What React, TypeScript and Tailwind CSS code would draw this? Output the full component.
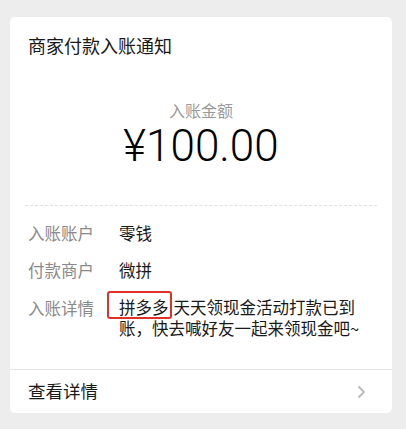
export default function App() {
  const cjk = "font-['Noto_Sans_CJK_SC','Noto_Sans',sans-serif]"
  return (
    <div className={`h-[429px] w-[406px] bg-[#ededed] px-[10px] pt-[17px] ${cjk}`}>
      <div className="w-[382px] rounded-[5px] bg-white">
        <div className="px-[18px] pt-[16px] text-[18px] leading-[24px] text-[#191919]">商家付款入账通知</div>

        <div className="mt-[42px] text-center text-[16px] leading-[22px] text-[#999999]">入账金额</div>
        <div className="mt-[3px] text-center font-['Roboto','Liberation_Sans',sans-serif] text-[44px] font-light leading-[44px] text-black">
          ¥100.00
        </div>

        <div className="mx-[15px] mt-[37px] border-t border-dashed border-[#e2e2e2]" />

        <div className="flex flex-col gap-[15px] px-[18px] pt-[16px] text-[16.5px] leading-[22px]">
          <div className="flex">
            <span className="w-[91px] shrink-0 text-[#8a8a8a]">入账账户</span>
            <span className="text-[#191919]">零钱</span>
          </div>
          <div className="flex">
            <span className="w-[91px] shrink-0 text-[#8a8a8a]">付款商户</span>
            <span className="text-[#191919]">微拼</span>
          </div>
          <div className="mt-[1px] flex">
            <span className="w-[91px] shrink-0 text-[#8a8a8a]">入账详情</span>
            <div className="relative w-[244px] leading-[21px] text-[#191919]">
              <span className="mr-[5px]">拼多多</span>天天领现金活动打款已到账，快去喊好友一起来领现金吧~
              <div className="absolute left-[-12px] top-[-6px] h-[28px] w-[65px] rounded-[3px] border-[2.5px] border-[#e0302a]" />
            </div>
          </div>
        </div>

        <div className="mt-[30px] flex h-[44px] items-center justify-between border-t border-[#e5e5e5] px-[18px]">
          <span className="text-[17.5px] text-[#191919]">查看详情</span>
          <svg width="9" height="14" viewBox="0 0 9 14" className="mr-[8px]">
            <polyline points="1.5,1.5 7,7 1.5,12.5" fill="none" stroke="#b8b8b8" strokeWidth="1.8" />
          </svg>
        </div>
      </div>
    </div>
  )
}
